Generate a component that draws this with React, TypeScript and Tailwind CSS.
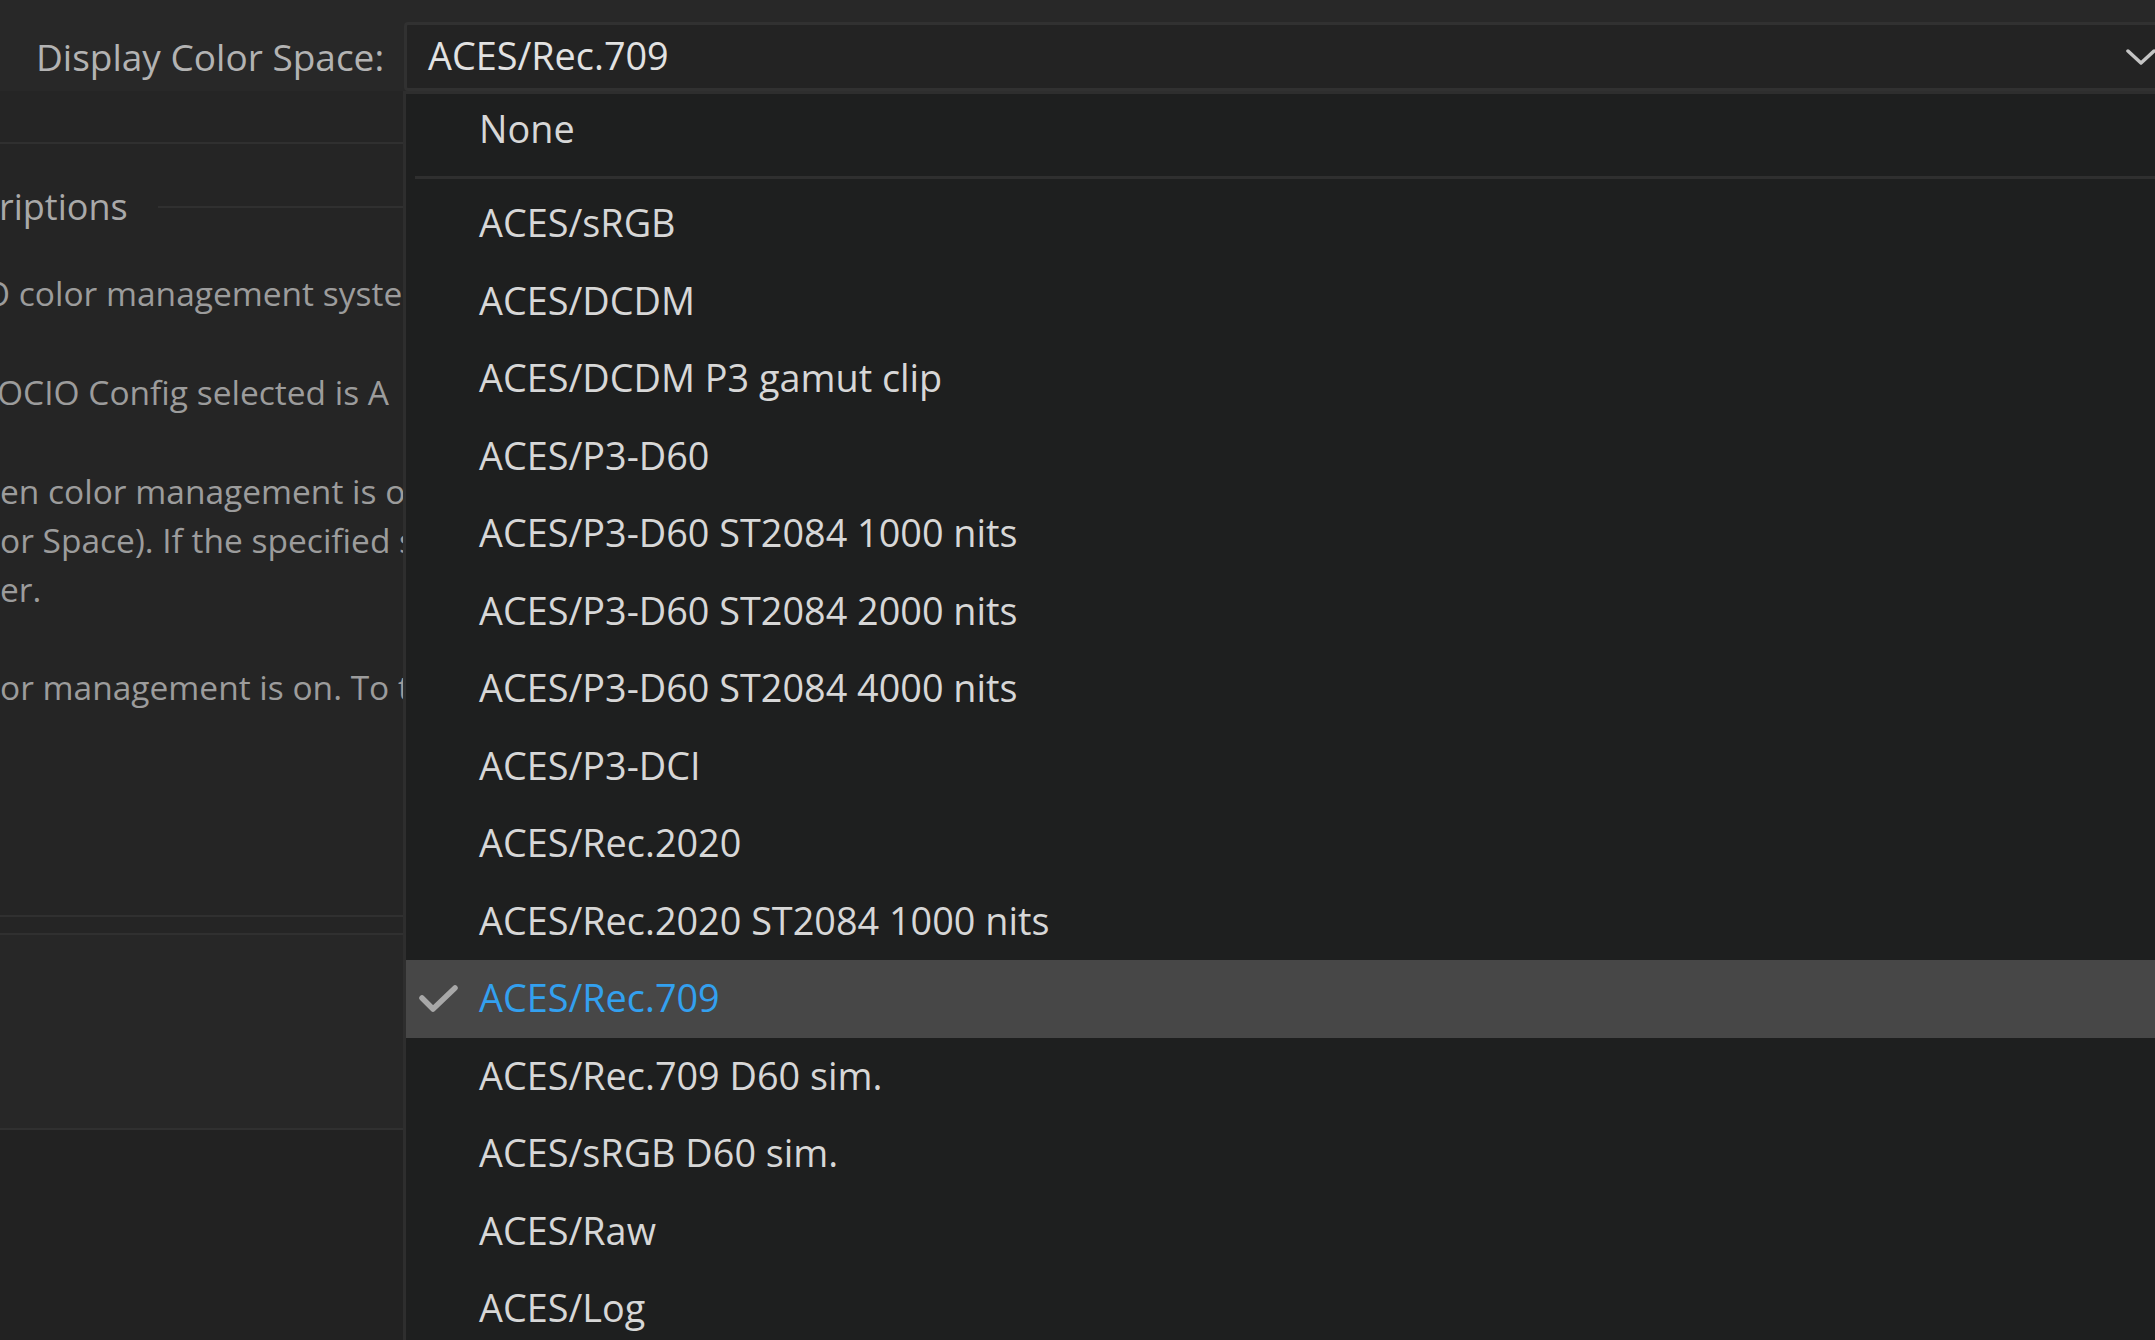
import React from 'react';

const options = [
  'ACES/sRGB',
  'ACES/DCDM',
  'ACES/DCDM P3 gamut clip',
  'ACES/P3-D60',
  'ACES/P3-D60 ST2084 1000 nits',
  'ACES/P3-D60 ST2084 2000 nits',
  'ACES/P3-D60 ST2084 4000 nits',
  'ACES/P3-DCI',
  'ACES/Rec.2020',
  'ACES/Rec.2020 ST2084 1000 nits',
  'ACES/Rec.709',
  'ACES/Rec.709 D60 sim.',
  'ACES/sRGB D60 sim.',
  'ACES/Raw',
  'ACES/Log',
  'ACES/ACEScg',
];

const selected = 'ACES/Rec.709';

function Check() {
  return (
    <svg width="40" height="30" viewBox="0 0 40 30" fill="none">
      <path d="M3 14 L14 25 L36 4" stroke="#a8a8a8" strokeWidth="5.5" strokeLinecap="round" strokeLinejoin="round" />
    </svg>
  );
}

function Chevron() {
  return (
    <svg width="30" height="18" viewBox="0 0 30 18" fill="none">
      <path d="M2 3 L15 15 L28 3" stroke="#c4c4c4" strokeWidth="3.5" strokeLinecap="round" strokeLinejoin="round" />
    </svg>
  );
}

export default function App() {
  return (
    <div className="relative w-[2155px] h-[1340px] overflow-hidden bg-[#252525] font-['Open_Sans',sans-serif]">
      {/* Top row: label + select */}
      <div className="flex items-center pt-[22px] bg-[#282828]">
        <div className="w-[404px] shrink-0 pl-[36px] text-[37px] leading-[69px] text-[#b3b3b3] whitespace-nowrap">
          Display Color Space:
        </div>
        <div className="w-[1771px] shrink-0 h-[69px] flex items-center justify-between rounded-[4px] border-[3px] border-[#313131] bg-[#232323] pl-[21px] pr-[16px]">
          <span className="text-[37.8px] text-[#e2e2e2] whitespace-nowrap">ACES/Rec.709</span>
          <Chevron />
        </div>
      </div>

      {/* Left panel (mostly hidden under the menu) */}
      <div className="w-[403px] overflow-hidden">
        <div className="mt-[51px] border-t-[2px] border-[#303030]" />
        <div className="mt-[39px] flex items-center">
          <span className="text-[36px] leading-[48px] text-[#a9a9a9] whitespace-nowrap -ml-[1px]">riptions</span>
          <div className="ml-[30px] flex-1 border-t-[2px] border-[#303030]" />
        </div>
        <div className="text-[33.5px] leading-[48px] text-[#9c9c9c] whitespace-nowrap">
          <div className="mt-[38px] -ml-[16px]">O color management syste</div>
          <div className="mt-[51px] -ml-[3px]">OCIO Config selected is A</div>
          <div className="mt-[51px] leading-[49px]">en color management is o</div>
          <div className="leading-[49px]">or Space). If the specified s</div>
          <div className="leading-[49px]">er.</div>
          <div className="mt-[49px]">or management is on. To tu</div>
        </div>
        <div className="mt-[204px] border-t-[2px] border-[#303030]" />
        <div className="mt-[16px] border-t-[2px] border-[#303030] h-[195px] bg-[#272727]" />
        <div className="border-t-[2px] border-[#303030] h-[220px] bg-[#222222]" />
      </div>

      {/* Dropdown menu */}
      <div className="absolute left-[403px] top-[91px] w-[1760px] h-[1300px] border-l-[3px] border-t-[3px] border-[#2e2e2e] bg-[#1e1f1f] text-[37.8px] text-[#d7d7d7]">
        <div className="h-[70px] flex items-center pl-[73px]">None</div>
        <div className="ml-[9px] mt-[12px] mb-[6px] border-t-[3px] border-[#2f2f2f]" />
        {options.map((opt) => {
          const isSel = opt === selected;
          return (
            <div
              key={opt}
              className={`h-[77.5px] flex items-center pl-[13px] ${isSel ? 'bg-[#474747] text-[#33a0ef]' : ''}`}
            >
              <div className="w-[60px] flex items-center">{isSel && <Check />}</div>
              <span className="whitespace-nowrap">{opt}</span>
            </div>
          );
        })}
      </div>
    </div>
  );
}
